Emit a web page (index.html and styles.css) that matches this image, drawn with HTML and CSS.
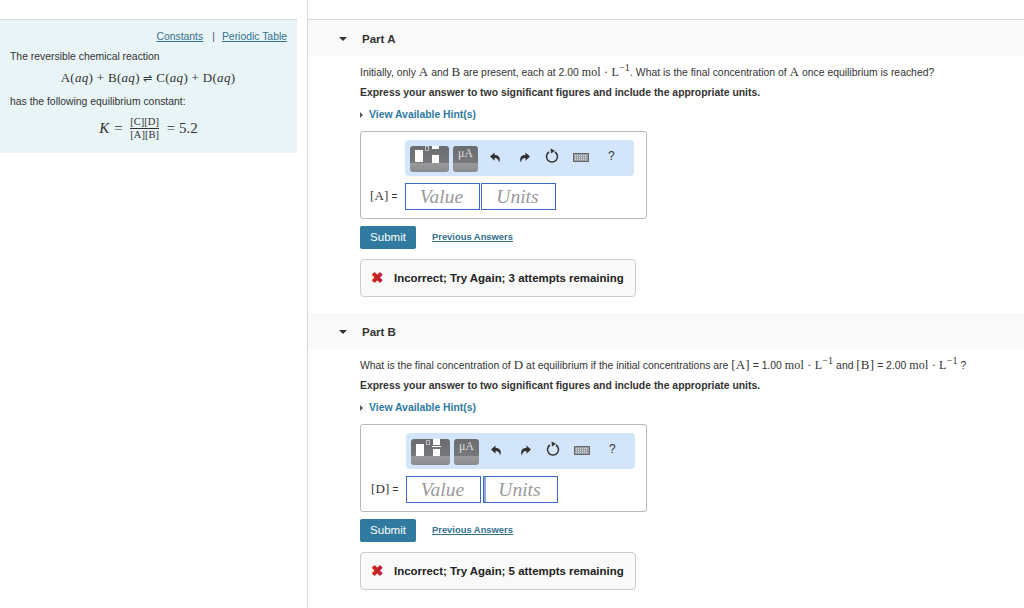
FILE: index.html
```html
<!DOCTYPE html>
<html lang="en">
<head>
<meta charset="utf-8">
<title>Equilibrium</title>
<link rel="stylesheet" href="styles.css">
</head>
<body>
<div class="page">
  <aside class="side">
    <div class="info">
      <div class="links"><a>Constants</a><span class="pipe">|</span><a>Periodic Table</a></div>
      <p class="txt first">The reversible chemical reaction</p>
      <div class="eq rx">A(<i>aq</i>) + B(<i>aq</i>) <span class="harp">⇌</span> C(<i>aq</i>) + D(<i>aq</i>)</div>
      <p class="txt second">has the following equilibrium constant:</p>
      <div class="eq keq"><i>K</i> = <span class="frac"><span class="num">[C][D]</span><span class="den">[A][B]</span></span> = 5.2</div>
    </div>
  </aside>
  <main class="main">
    <section class="part">
      <header class="phead"><span class="caret"></span><span>Part A</span></header>
      <div class="pbody">
        <p class="q">Initially, only <span class="m big">A</span> and <span class="m big">B</span> are present, each at 2.00 <span class="m">mol · L<sup>−1</sup></span>. What is the final concentration of <span class="m big">A</span> once equilibrium is reached?</p>
        <p class="hint-b">Express your answer to two significant figures and include the appropriate units.</p>
        <p class="hint"><span class="tri"></span>View Available Hint(s)</p>
        <div class="answer">
          <div class="tools">
            <span class="tbtn wide"><svg width="39" height="26" viewBox="0 0 39 26"><rect x="5" y="4" width="8" height="12" fill="#fff"/><rect x="15.500" y="0.500" width="3" height="4" fill="none" stroke="#bbb"/><rect x="22" y="0" width="7" height="3" fill="#fff"/><rect x="22" y="9" width="7" height="8" fill="#fff"/></svg></span>
            <span class="tbtn narrow">μA</span>
            <svg class="ico" width="11" height="11" viewBox="0 0 12 12"><path d="M5 .5 0 5l5 4.500V6.500c2.500 0 4 1 5 5C12 6 9.500 3.200 5 3.200z" fill="#333"/></svg>
            <svg class="ico i2" width="11" height="11" viewBox="0 0 12 12"><path d="M7 .5 12 5 7 9.500V6.500c-2.500 0-4 1-5 5C0 6 2.500 3.200 7 3.200z" fill="#333"/></svg>
            <svg class="ico i3" width="14" height="15" viewBox="0 0 14 15"><path d="M4 4a5.500 5.500 0 1 0 6 0" fill="none" stroke="#333" stroke-width="1.500"/><path d="M5.500 .5 10 2.800 6 5.500z" fill="#333"/></svg>
            <svg class="ico i4" width="16" height="9" viewBox="0 0 16 9"><rect x=".5" y=".5" width="15" height="8" fill="#9a9fa8" stroke="#666"/><path d="M2 2.500h12M2 4.500h12M2 6.500h12" stroke="#ddd" stroke-dasharray="1 1"/></svg>
            <span class="qm">?</span>
          </div>
          <div class="row">
            <span class="lbl"><span class="m big">[A]</span> =</span>
            <span class="box">Value</span><span class="box">Units</span>
          </div>
        </div>
        <div class="acts"><span class="submit">Submit</span><a class="prev">Previous Answers</a></div>
        <div class="fb"><span class="x">✖</span>Incorrect; Try Again; 3 attempts remaining</div>
      </div>
    </section>
    <section class="part">
      <header class="phead"><span class="caret"></span><span>Part B</span></header>
      <div class="pbody">
        <p class="q">What is the final concentration of <span class="m big">D</span> at equilibrium if the initial concentrations are <span class="m big">[A]</span> = 1.00 <span class="m">mol · L<sup>−1</sup></span> and <span class="m big">[B]</span> = 2.00 <span class="m">mol · L<sup>−1</sup></span> ?</p>
        <p class="hint-b">Express your answer to two significant figures and include the appropriate units.</p>
        <p class="hint"><span class="tri"></span>View Available Hint(s)</p>
        <div class="answer">
          <div class="tools shifted">
            <span class="tbtn wide"><svg width="39" height="26" viewBox="0 0 39 26"><rect x="5" y="5" width="8" height="12" fill="#fff"/><rect x="15.500" y="1.500" width="3" height="4" fill="none" stroke="#bbb"/><rect x="22" y="0" width="7" height="6" fill="#fff"/><rect x="21" y="7" width="9" height="1" fill="#fff"/><rect x="22" y="10" width="7" height="7" fill="#fff"/></svg></span>
            <span class="tbtn narrow">μA</span>
            <svg class="ico" width="11" height="11" viewBox="0 0 12 12"><path d="M5 .5 0 5l5 4.500V6.500c2.500 0 4 1 5 5C12 6 9.500 3.200 5 3.200z" fill="#333"/></svg>
            <svg class="ico i2" width="11" height="11" viewBox="0 0 12 12"><path d="M7 .5 12 5 7 9.500V6.500c-2.500 0-4 1-5 5C0 6 2.500 3.200 7 3.200z" fill="#333"/></svg>
            <svg class="ico i3" width="14" height="15" viewBox="0 0 14 15"><path d="M4 4a5.500 5.500 0 1 0 6 0" fill="none" stroke="#333" stroke-width="1.500"/><path d="M5.500 .5 10 2.800 6 5.500z" fill="#333"/></svg>
            <svg class="ico i4" width="16" height="9" viewBox="0 0 16 9"><rect x=".5" y=".5" width="15" height="8" fill="#9a9fa8" stroke="#666"/><path d="M2 2.500h12M2 4.500h12M2 6.500h12" stroke="#ddd" stroke-dasharray="1 1"/></svg>
            <span class="qm">?</span>
          </div>
          <div class="row shifted">
            <span class="lbl"><span class="m big">[D]</span> =</span>
            <span class="box">Value</span><span class="box cursor">Units</span>
          </div>
        </div>
        <div class="acts"><span class="submit">Submit</span><a class="prev">Previous Answers</a></div>
        <div class="fb"><span class="x">✖</span>Incorrect; Try Again; 5 attempts remaining</div>
      </div>
    </section>
  </main>
</div>
</body>
</html>
```
FILE: styles.css
```css
* { box-sizing: border-box; }
html, body { margin: 0; height: 100%; overflow: hidden; background: #fff; }
body { font-family: "Liberation Sans", Arial, sans-serif; font-size: 10.4px; color: #333; }
p { margin: 0; }
.page { display: flex; height: 608px; }
.side { width: 308px; flex: none; padding-top: 19px; border-right: 1px solid #d9d9d9; }
.info { width: 297px; height: 134px; background: #e9f4f7; border-top: 1px solid #dcdcdc; padding: 10px 0 0 10px; }
.links { display: flex; justify-content: flex-end; padding-right: 10px; height: 13px; line-height: 13px; font-size: 10.4px; color: #33708f; }
.links a { text-decoration: underline; }
.pipe { margin: 0 7px 0 9px; color: #555; }
.txt { line-height: 14px; }
.first { margin-top: 7px; }
.second { margin-top: 9px; }
.eq { font-family: "Liberation Serif", serif; color: #333; text-align: center; }
.rx { font-size: 13px; line-height: 16px; margin-top: 6px; padding-right: 11px; letter-spacing: 0.3px; }
.harp { font-size: 11px; }
.keq { font-size: 15px; display: flex; justify-content: center; align-items: center; gap: 1px; height: 28px; margin-top: 5px; padding-right: 10px; white-space: pre; }
.frac { display: inline-flex; flex-direction: column; font-size: 10.5px; line-height: 12px; text-align: center; margin: 0 3px; }
.num { border-bottom: 1px solid #333; }
.main { flex: 1; min-width: 0; padding-top: 19px; }
.part { height: 293px; }
.part:first-child { border-top: 1px solid #dcdcdc; height: 294px; }
.phead { display: flex; align-items: center; height: 36px; background: #f9f9f9; padding: 1px 0 0 31px; font-weight: bold; font-size: 11.5px; gap: 15px; color: #333; }
.caret { width: 0; height: 0; border: 4.5px solid transparent; border-top: 4.5px solid #333; border-bottom: 0; }
.pbody { padding-left: 52px; }
.q { height: 18px; margin-top: 6px; line-height: 18px; white-space: nowrap; color: #333; padding-top: 1px; }
.m { font-family: "Liberation Serif", serif; font-size: 12px; letter-spacing: 0.2px; }
.m.big { font-size: 13px; }
.m sup { font-size: 10px; line-height: 0; }
.hint-b { margin-top: 4px; height: 18px; line-height: 18px; font-weight: bold; }
.hint { margin-top: 6px; height: 14px; line-height: 14px; font-weight: bold; color: #2e7a9e; display: flex; align-items: center; }
.tri { width: 0; height: 0; margin-right: 6px; border: 3px solid transparent; border-left: 3px solid #555; border-right: 0; }
.answer { width: 287px; height: 88px; margin-top: 9px; border: 1px solid #b8b8b8; border-radius: 3px; padding: 8px 0 0 44px; }
.tools { width: 229px; height: 36px; background: #d2e5fb; border-radius: 4px; display: flex; align-items: center; padding-left: 5px; }
.tools.shifted { margin-left: 1px; }
.tbtn { height: 26px; margin-top: 2px; border-radius: 3px; background: linear-gradient(#6b6c70 0, #77787b 64%, #9a9a9c 66%, #8b8b8d 100%); display: block; flex: none; }
.tbtn svg { display: block; }
.wide { width: 39px; }
.narrow { width: 25px; margin-left: 4px; color: #ddd; font-family: "Liberation Serif", serif; font-size: 12px; line-height: 14px; text-align: center; }
.ico { margin-left: 12px; margin-bottom: 2px; flex: none; }
.i2 { margin-left: 18px; }
.i3 { margin-left: 15px; margin-bottom: 5px; }
.i4 { margin-left: 14px; margin-bottom: 2px; }
.qm { margin-left: 19px; margin-bottom: 4px; font-size: 12px; color: #333; }
.row { display: flex; align-items: center; height: 26px; margin-top: 7px; position: relative; }
.row.shifted { margin-left: 1px; }
.lbl { position: absolute; left: -35px; font-size: 10px; white-space: nowrap; }
.box { width: 75px; height: 27px; padding-right: 2px; border: 1px solid #3a6bc4; margin-right: 1px; text-align: center; font-family: "Liberation Serif", serif; font-style: italic; font-size: 19.5px; line-height: 25px; color: #999; flex: none; }
.cursor { margin-left: 1px; box-shadow: inset 3px 0 0 -1px #8fa8e0; }
.acts { display: flex; align-items: center; margin-top: 7px; height: 23px; }
.submit { width: 56px; height: 23px; line-height: 23px; text-align: center; color: #fff; background: #2f7a9e; border-radius: 2px; font-size: 11.5px; flex: none; }
.prev { margin-left: 16px; margin-bottom: 3px; font-weight: bold; font-size: 9.4px; color: #33708f; text-decoration: underline; }
.fb { display: flex; align-items: center; width: 276px; height: 38px; margin-top: 10px; border: 1px solid #ccc; border-radius: 4px; background: #f9f9f9; font-weight: bold; font-size: 11.45px; color: #222; padding-left: 10px; white-space: nowrap; }
.x { color: #c8202a; font-size: 15px; width: 23px; flex: none; }
```
